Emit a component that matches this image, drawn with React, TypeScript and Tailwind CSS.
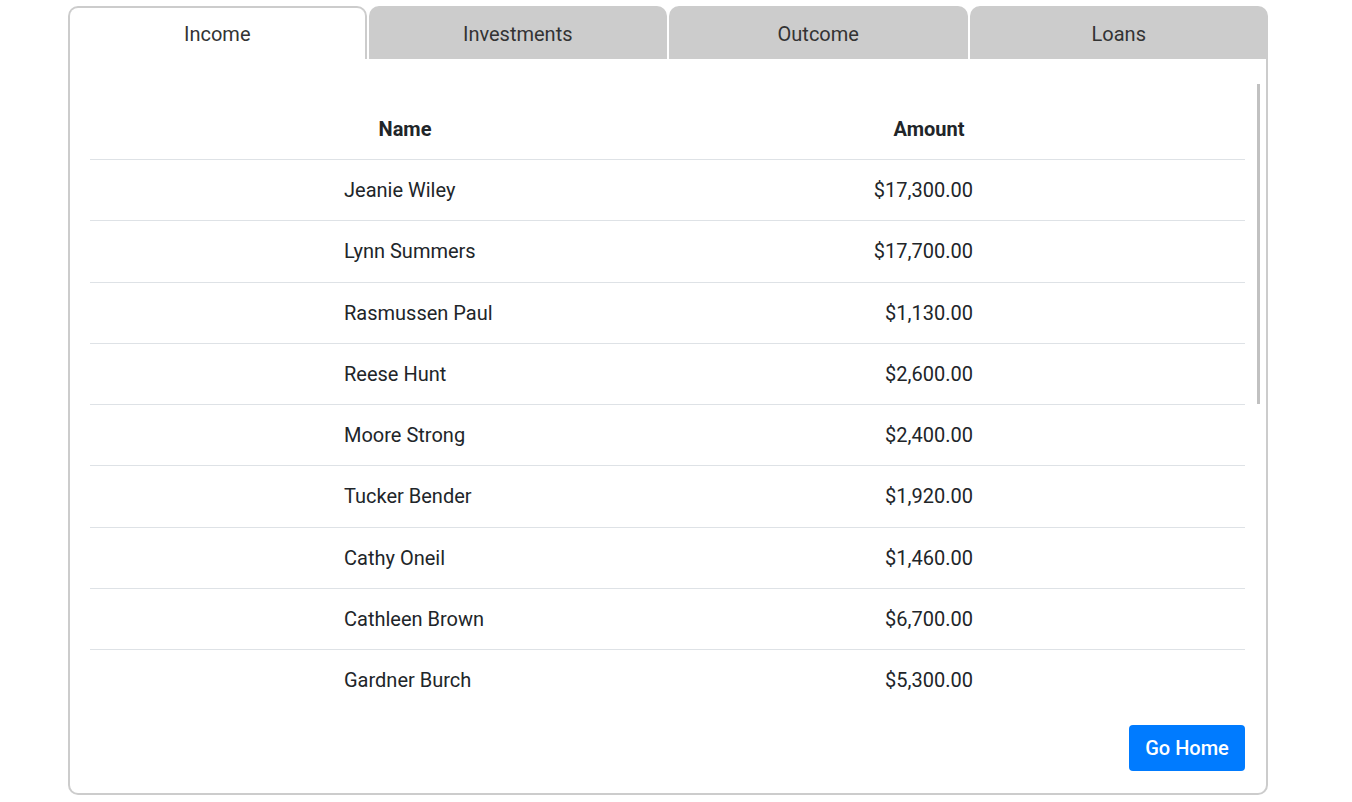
import { useState } from 'react'

const tabs = ['Income', 'Investments', 'Outcome', 'Loans']

const rows = [
  { name: 'Jeanie Wiley', amount: 17300 },
  { name: 'Lynn Summers', amount: 17700 },
  { name: 'Rasmussen Paul', amount: 1130 },
  { name: 'Reese Hunt', amount: 2600 },
  { name: 'Moore Strong', amount: 2400 },
  { name: 'Tucker Bender', amount: 1920 },
  { name: 'Cathy Oneil', amount: 1460 },
  { name: 'Cathleen Brown', amount: 6700 },
  { name: 'Gardner Burch', amount: 5300 },
]

const money = (n: number) =>
  '$' + n.toLocaleString('en-US', { minimumFractionDigits: 2, maximumFractionDigits: 2 })

export default function App() {
  const [active, setActive] = useState(0)

  return (
    <div
      className="ml-[68px] mt-[6px] w-[1200px] text-[20px] text-[#212529]"
      style={{ fontFamily: 'Roboto, "Liberation Sans", sans-serif' }}
    >
      <div className="flex gap-[2px]">
        {tabs.map((t, i) => (
          <button
            key={t}
            onClick={() => setActive(i)}
            className={
              i === active
                ? 'w-[298.5px] shrink-0 h-[53px] rounded-t-[10px] border-2 border-b-0 border-[#cccccc] bg-white text-[#333333] pt-[1px]'
                : 'w-[298.5px] shrink-0 h-[53px] rounded-t-[10px] bg-[#cccccc] text-[#333333] pt-[2px]'
            }
          >
            {t}
          </button>
        ))}
      </div>

      <div className="relative border-2 border-t-0 border-[#cccccc] rounded-b-[10px] px-[20px] pr-[21px] pt-[25px] pb-[22px]">
        {/* scroll thumb */}
        <div className="absolute right-[6px] top-[25px] h-[320px] w-[3px] bg-[#c1c1c1]" />

        <div className="h-[626px] overflow-hidden pt-[15px]">
          <div className="flex h-[61px] items-center border-b border-[#dee2e6] font-bold">
            <div className="w-[630px] text-center">Name</div>
            <div className="w-[418px] text-center">Amount</div>
          </div>
          {rows.map((r) => (
            <div key={r.name} className="flex h-[61.25px] items-center border-b border-[#dee2e6]">
              <div className="w-[630px] pl-[254px]">{r.name}</div>
              <div className="w-[418px] pr-[165px] text-right">{money(r.amount)}</div>
            </div>
          ))}
        </div>

        <div className="mt-[15px] flex justify-end">
          <button className="h-[46px] w-[116px] rounded-[4px] bg-[#007bff] font-medium text-white">
            Go Home
          </button>
        </div>
      </div>
    </div>
  )
}
